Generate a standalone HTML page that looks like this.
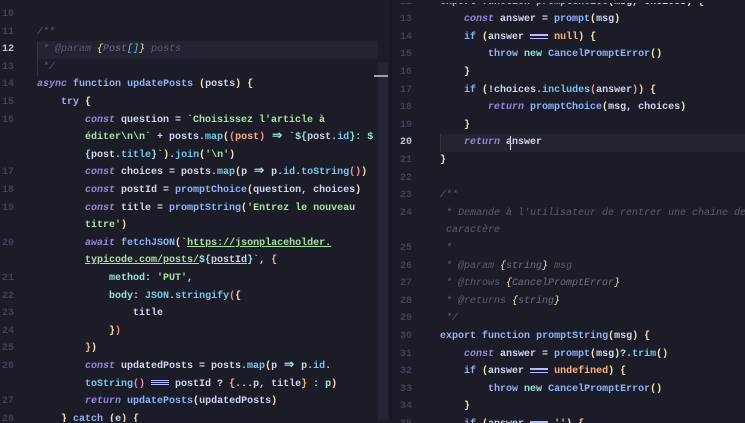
<!DOCTYPE html>
<html><head><meta charset="utf-8"><style>
body{margin:0;width:745px;height:420px;overflow:hidden;background:#1c1c28;font-family:"Liberation Mono",monospace;font-size:10px;font-weight:bold;color:#cdd6f4}
.pane{position:absolute;top:0;height:420px;overflow:hidden}
.row{position:absolute;left:0;right:0;height:17.6px;line-height:17.6px;white-space:pre}
.n{position:absolute;width:24px;text-align:right;color:#3e4056}
.c{position:absolute}
.cur .n{color:#bac2de}
.k{color:#8f89e0;font-style:italic}
.kw{color:#94b0f0}
.f{color:#89b4fa}
.m{color:#74c7ec}
.p{color:#f9e2af}
.s{color:#a6e3a1}
.cm{color:#585b70;font-style:italic;font-weight:normal}
.ct{color:#f9e2af;font-style:italic;font-weight:normal}
.cl{color:#6c7086;font-style:italic;font-weight:normal}
.o{color:#94e2d5}
.nu{color:#fab387}
.r{color:#f38ba8}
.u{text-decoration:underline;text-decoration-color:#a6e3a1}
.a{display:inline-block;width:12px;text-align:center;color:#94e2d5;font-size:12px;line-height:10px}
.q{display:inline-block;width:18px;vertical-align:middle;height:5px;border-top:1.5px solid #b4befe;border-bottom:1.5px solid #b4befe;position:relative;box-sizing:border-box}
.q:after{content:"";position:absolute;left:0;right:0;top:0.5px;border-top:1.5px solid #b4befe}
</style></head><body>
<div class="pane" style="left:0;width:390px">
<div style="position:absolute;left:37px;top:41px;width:341px;height:18px;background:#232331"></div>
<div style="position:absolute;left:378px;top:62px;width:10px;height:358px;background:#252535"></div>
<div style="position:absolute;left:374px;top:75px;width:14px;height:2px;background:#9aa0b8"></div>
<div style="position:absolute;left:37px;top:42px;width:1px;height:34px;background:#33344a"></div>
</div>
<div style="position:absolute;left:390px;top:0;width:2px;height:420px;background:#16161f"></div>
<div class="pane" style="left:392px;width:353px">
<div style="position:absolute;left:48px;top:134px;width:305px;height:18px;background:#232331"></div>
<div style="position:absolute;left:48px;top:134px;width:1px;height:18px;background:#33344a"></div>
<div style="position:absolute;left:118px;top:136px;width:1px;height:14px;background:#e0e0e0"></div>
</div>
<div class="pane" style="left:0;width:378px;top:2px">
<div class="row" style="top:4px"><span class="n" style="left:-10px">10</span></div>
<div class="row" style="top:21.6px"><span class="n" style="left:-10px">11</span><span class="c cm" style="left:37px">/**</span></div>
<div class="row cur" style="top:39.2px"><span class="n" style="left:-10px">12</span><span class="c cm" style="left:37px"> * @param <span class="ct">{</span><span class="cl">Post</span><span class="m">[]</span><span class="ct">}</span> posts</span></div>
<div class="row" style="top:56.8px"><span class="n" style="left:-10px">13</span><span class="c cm" style="left:37px"> */</span></div>
<div class="row" style="top:74.4px"><span class="n" style="left:-10px">14</span><span class="c" style="left:37px"><span class="k">async</span> <span class="kw">function</span> <span class="f">updatePosts</span> <span class="p">(</span>posts<span class="p">)</span> <span class="p">{</span></span></div>
<div class="row" style="top:92px"><span class="n" style="left:-10px">15</span><span class="c" style="left:61px"><span class="kw">try</span> <span class="p">{</span></span></div>
<div class="row" style="top:109.6px"><span class="n" style="left:-10px">16</span><span class="c" style="left:85px"><span class="k">const</span> question = <span class="s">`Choisissez l'article à</span></span></div>
<div class="row" style="top:127.2px"><span class="c" style="left:85px"><span class="s">éditer\n\n`</span> + posts.<span class="m">map</span><span class="p">(</span><span class="r">(</span><span class="nu">post</span><span class="r">)</span> <span class="a">⇒</span> <span class="s">`</span><span class="o">${</span>post.<span class="m">id</span><span class="o">}</span><span class="s">: </span><span class="o">$</span></span></div>
<div class="row" style="top:144.8px"><span class="c" style="left:85px"><span class="o">{</span>post.<span class="m">title</span><span class="o">}</span><span class="s">`</span><span class="p">)</span>.<span class="m">join</span><span class="p">(</span><span class="s">'\n'</span><span class="p">)</span></span></div>
<div class="row" style="top:162.4px"><span class="n" style="left:-10px">17</span><span class="c" style="left:85px"><span class="k">const</span> choices = posts.<span class="m">map</span><span class="p">(</span>p <span class="a">⇒</span> p.<span class="m">id</span>.<span class="m">toString</span><span class="r">()</span><span class="p">)</span></span></div>
<div class="row" style="top:180px"><span class="n" style="left:-10px">18</span><span class="c" style="left:85px"><span class="k">const</span> postId = <span class="f">promptChoice</span><span class="p">(</span>question, choices<span class="p">)</span></span></div>
<div class="row" style="top:197.6px"><span class="n" style="left:-10px">19</span><span class="c" style="left:85px"><span class="k">const</span> title = <span class="f">promptString</span><span class="p">(</span><span class="s">'Entrez le nouveau</span></span></div>
<div class="row" style="top:215.2px"><span class="c" style="left:85px"><span class="s">titre'</span><span class="p">)</span></span></div>
<div class="row" style="top:232.8px"><span class="n" style="left:-10px">20</span><span class="c" style="left:85px"><span class="k">await</span> <span class="f">fetchJSON</span><span class="p">(</span><span class="s">`<span class="u">https://jsonplaceholder.</span></span></span></div>
<div class="row" style="top:250.4px"><span class="c" style="left:85px"><span class="s u">typicode.com/posts/</span><span class="o">${</span><span class="u">postId</span><span class="o">}</span><span class="s">`</span>, <span class="nu">{</span></span></div>
<div class="row" style="top:268px"><span class="n" style="left:-10px">21</span><span class="c" style="left:109px"><span class="o">method</span>: <span class="s">'PUT'</span>,</span></div>
<div class="row" style="top:285.6px"><span class="n" style="left:-10px">22</span><span class="c" style="left:109px"><span class="o">body</span>: <span class="m">JSON</span>.<span class="m">stringify</span><span class="r">(</span><span class="p">{</span></span></div>
<div class="row" style="top:303.2px"><span class="n" style="left:-10px">23</span><span class="c" style="left:133px">title</span></div>
<div class="row" style="top:320.8px"><span class="n" style="left:-10px">24</span><span class="c" style="left:109px"><span class="p">}</span><span class="r">)</span></span></div>
<div class="row" style="top:338.4px"><span class="n" style="left:-10px">25</span><span class="c" style="left:85px"><span class="nu">}</span><span class="p">)</span></span></div>
<div class="row" style="top:356px"><span class="n" style="left:-10px">26</span><span class="c" style="left:85px"><span class="k">const</span> updatedPosts = posts.<span class="m">map</span><span class="p">(</span>p <span class="a">⇒</span> p.<span class="m">id</span>.</span></div>
<div class="row" style="top:373.6px"><span class="c" style="left:85px"><span class="m">toString</span><span class="r">()</span> <span class="q"></span> postId ? <span class="nu">{</span>...p, title<span class="nu">}</span> : p<span class="p">)</span></span></div>
<div class="row" style="top:391.2px"><span class="n" style="left:-10px">27</span><span class="c" style="left:85px"><span class="k">return</span> <span class="f">updatePosts</span><span class="p">(</span>updatedPosts<span class="p">)</span></span></div>
<div class="row" style="top:408.8px"><span class="n" style="left:-10px">28</span><span class="c" style="left:61px"><span class="p">}</span> <span class="kw">catch</span> <span class="p">(</span>e<span class="p">)</span> <span class="p">{</span></span></div>
</div>
<div class="pane" style="left:392px;width:353px;top:3px">
<div class="row" style="top:-9.5px"><span class="n" style="left:-4px">12</span><span class="c" style="left:48px"><span class="kw">export</span> <span class="kw">function</span> <span class="f">promptChoice</span><span class="p">(</span>msg, choices<span class="p">)</span> <span class="p">{</span></span></div>
<div class="row" style="top:8.1px"><span class="n" style="left:-4px">13</span><span class="c" style="left:72px"><span class="k">const</span> answer = <span class="f">prompt</span><span class="p">(</span>msg<span class="p">)</span></span></div>
<div class="row" style="top:25.7px"><span class="n" style="left:-4px">14</span><span class="c" style="left:72px"><span class="kw">if</span> <span class="p">(</span>answer <span class="q"></span> <span class="nu">null</span><span class="p">)</span> <span class="p">{</span></span></div>
<div class="row" style="top:43.3px"><span class="n" style="left:-4px">15</span><span class="c" style="left:96px"><span class="kw">throw</span> <span class="o">new</span> <span class="f">CancelPromptError</span><span class="p">()</span></span></div>
<div class="row" style="top:60.9px"><span class="n" style="left:-4px">16</span><span class="c" style="left:72px"><span class="p">}</span></span></div>
<div class="row" style="top:78.5px"><span class="n" style="left:-4px">17</span><span class="c" style="left:72px"><span class="kw">if</span> <span class="p">(</span>!choices.<span class="m">includes</span><span class="r">(</span>answer<span class="r">)</span><span class="p">)</span> <span class="p">{</span></span></div>
<div class="row" style="top:96.1px"><span class="n" style="left:-4px">18</span><span class="c" style="left:96px"><span class="k">return</span> <span class="f">promptChoice</span><span class="p">(</span>msg, choices<span class="p">)</span></span></div>
<div class="row" style="top:113.7px"><span class="n" style="left:-4px">19</span><span class="c" style="left:72px"><span class="p">}</span></span></div>
<div class="row cur" style="top:131.3px"><span class="n" style="left:-4px">20</span><span class="c" style="left:72px"><span class="k">return</span> answer</span></div>
<div class="row" style="top:148.9px"><span class="n" style="left:-4px">21</span><span class="c" style="left:48px"><span class="p">}</span></span></div>
<div class="row" style="top:166.5px"><span class="n" style="left:-4px">22</span></div>
<div class="row" style="top:184.1px"><span class="n" style="left:-4px">23</span><span class="c cm" style="left:48px">/**</span></div>
<div class="row" style="top:201.7px"><span class="n" style="left:-4px">24</span><span class="c cm" style="left:48px"> * Demande à l'utilisateur de rentrer une chaine de</span></div>
<div class="row" style="top:219.3px"><span class="c cm" style="left:48px"> caractère</span></div>
<div class="row" style="top:236.9px"><span class="n" style="left:-4px">25</span><span class="c cm" style="left:48px"> *</span></div>
<div class="row" style="top:254.5px"><span class="n" style="left:-4px">26</span><span class="c cm" style="left:48px"> * @param <span class="ct">{</span><span class="cl">string</span><span class="ct">}</span> msg</span></div>
<div class="row" style="top:272.1px"><span class="n" style="left:-4px">27</span><span class="c cm" style="left:48px"> * @throws <span class="ct">{</span><span class="cl">CancelPromptError</span><span class="ct">}</span></span></div>
<div class="row" style="top:289.7px"><span class="n" style="left:-4px">28</span><span class="c cm" style="left:48px"> * @returns <span class="ct">{</span><span class="cl">string</span><span class="ct">}</span></span></div>
<div class="row" style="top:307.3px"><span class="n" style="left:-4px">29</span><span class="c cm" style="left:48px"> */</span></div>
<div class="row" style="top:324.9px"><span class="n" style="left:-4px">30</span><span class="c" style="left:48px"><span class="kw">export</span> <span class="kw">function</span> <span class="f">promptString</span><span class="p">(</span>msg<span class="p">)</span> <span class="p">{</span></span></div>
<div class="row" style="top:342.5px"><span class="n" style="left:-4px">31</span><span class="c" style="left:72px"><span class="k">const</span> answer = <span class="f">prompt</span><span class="p">(</span>msg<span class="p">)</span>?.<span class="m">trim</span><span class="p">()</span></span></div>
<div class="row" style="top:360.1px"><span class="n" style="left:-4px">32</span><span class="c" style="left:72px"><span class="kw">if</span> <span class="p">(</span>answer <span class="q"></span> <span class="nu">undefined</span><span class="p">)</span> <span class="p">{</span></span></div>
<div class="row" style="top:377.7px"><span class="n" style="left:-4px">33</span><span class="c" style="left:96px"><span class="kw">throw</span> <span class="o">new</span> <span class="f">CancelPromptError</span><span class="p">()</span></span></div>
<div class="row" style="top:395.3px"><span class="n" style="left:-4px">34</span><span class="c" style="left:72px"><span class="p">}</span></span></div>
<div class="row" style="top:412.9px"><span class="n" style="left:-4px">35</span><span class="c" style="left:72px"><span class="kw">if</span> <span class="p">(</span>answer <span class="q"></span> <span class="s">''</span><span class="p">)</span> <span class="p">{</span></span></div>
</div>
</body></html>
